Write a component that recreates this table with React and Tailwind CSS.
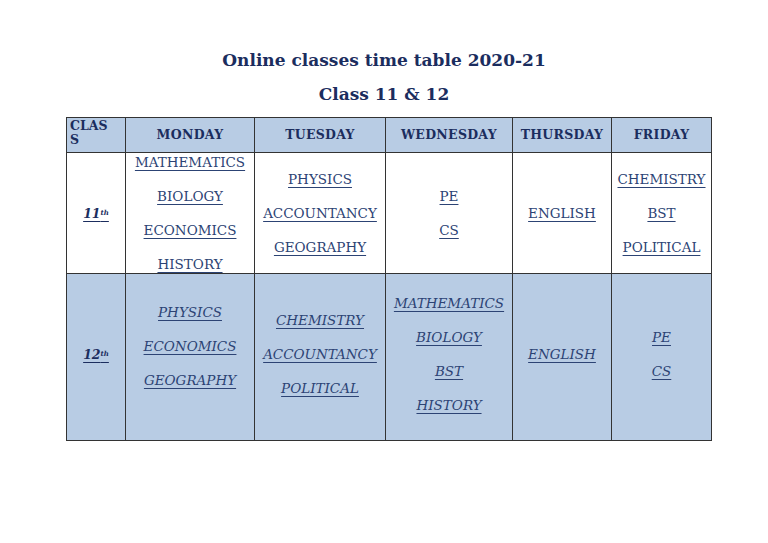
import React from "react";

const days = ["MONDAY", "TUESDAY", "WEDNESDAY", "THURSDAY", "FRIDAY"];
const widths = ["w-[59px]", "w-[129px]", "w-[131px]", "w-[127px]", "w-[99px]", "w-[100px]"];

const row11 = [
  ["MATHEMATICS", "BIOLOGY", "ECONOMICS", "HISTORY"],
  ["PHYSICS", "ACCOUNTANCY", "GEOGRAPHY"],
  ["PE", "CS"],
  ["ENGLISH"],
  ["CHEMISTRY", "BST", "POLITICAL"],
];
const row12 = [
  ["PHYSICS", "ECONOMICS", "GEOGRAPHY"],
  ["CHEMISTRY", "ACCOUNTANCY", "POLITICAL"],
  ["MATHEMATICS", "BIOLOGY", "BST", "HISTORY"],
  ["ENGLISH"],
  ["PE", "CS"],
];

function Cell({ items, italic, pad }) {
  return (
    <td className="border border-[#333] text-center align-middle p-0">
      <div className={`flex flex-col items-center gap-[16px] ${pad || ""}`}>
        {items.map((s) => (
          <span
            key={s}
            className={`text-[13.5px] leading-[18px] underline underline-offset-[3px] text-[#2c4374] ${italic ? "italic" : ""}`}
          >
            {s}
          </span>
        ))}
      </div>
    </td>
  );
}

export default function App() {
  return (
    <div
      className="w-[768px] h-[543px] bg-white overflow-hidden"
      style={{ fontFamily: '"DejaVu Serif", "Liberation Serif", serif' }}
    >
      <div className="pt-[49px] flex flex-col items-center text-[#1b2d5e] font-bold">
        <div className="text-[17px] leading-[22px]">Online classes time table 2020-21</div>
        <div className="text-[17px] leading-[22px] mt-[12px]">Class 11 &amp; 12</div>
      </div>
      <table className="ml-[66px] mt-[12px] border-collapse table-fixed w-[645px]">
        <colgroup>
          {widths.map((w, i) => (
            <col key={i} className={w} />
          ))}
        </colgroup>
        <tbody>
          <tr className="h-[35px] bg-[#b8cce4]">
            <td className="border border-[#333] align-top px-[3px] pt-[1px] text-[12.5px] leading-[14px] font-bold text-[#1b2d5e]">
              CLAS
              <br />S
            </td>
            {days.map((d) => (
              <td key={d} className="border border-[#333] text-center text-[12.5px] font-bold text-[#1b2d5e] tracking-[0.3px]">
                {d}
              </td>
            ))}
          </tr>
          <tr className="h-[119px] bg-white">
            <td className="border border-[#333] text-center align-middle">
              <span className="text-[12.5px] font-bold italic underline underline-offset-[3px] text-[#1b2d5e]">
                11<sup className="text-[7px]">th</sup>
              </span>
            </td>
            {row11.map((items, i) => (
              <Cell key={i} items={items} />
            ))}
          </tr>
          <tr className="h-[167px] bg-[#b8cce4]">
            <td className="border border-[#333] text-center align-middle">
              <div className="pb-[6px]">
                <span className="text-[12.5px] font-bold italic underline underline-offset-[3px] text-[#1b2d5e]">
                  12<sup className="text-[7px]">th</sup>
                </span>
              </div>
            </td>
            {row12.map((items, i) => (
              <Cell key={i} items={items} italic pad={i === 0 ? "pb-[22px]" : "pb-[6px]"} />
            ))}
          </tr>
        </tbody>
      </table>
    </div>
  );
}
